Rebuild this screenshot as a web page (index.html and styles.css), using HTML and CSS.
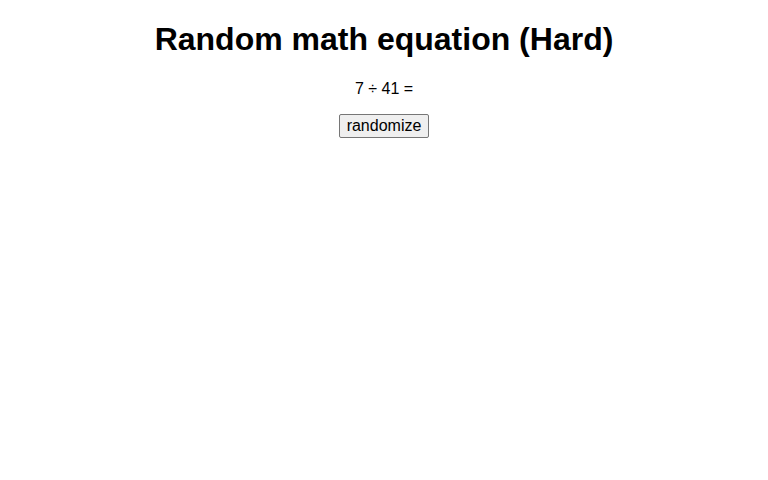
FILE: index.html
```html
<!DOCTYPE html>
<html lang="en">
<head>
  <meta charset="UTF-8">
  <meta name="viewport" content="width=device-width, initial-scale=1.0">
  <title>Random math equation</title>
  <link rel="stylesheet" href="styles.css">
</head>
<body>
  <div class="container">
    <h1>Random math equation (Hard)</h1>
    <p class="equation">7 ÷ 41 =</p>
    <p><button class="randbtn">randomize</button></p>
  </div>
</body>
</html>
```

FILE: styles.css
```css
body {
  margin: 0 8px;
  font-family: "Liberation Sans", Arial, sans-serif;
}
.container {
  text-align: center;
}
h1 {
  font-size: 32px;
}
.equation {
  font-size: 16px;
}
.randbtn {
  font-family: "Liberation Sans", Arial, sans-serif;
  font-size: 16px;
  padding: 2px 7px;
  background-color: #efefef;
  border: 1px solid #767676;
  border-radius: 2px;
  color: black;
}
```
